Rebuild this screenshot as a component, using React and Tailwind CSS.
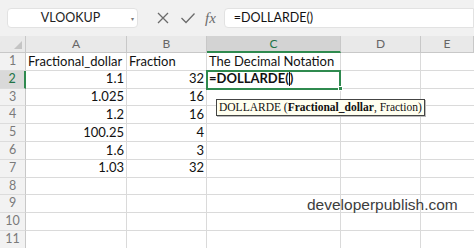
import React from 'react';

const cols = ['A', 'B', 'C', 'D', 'E'];
const rows = [
  ['Fractional_dollar', 'Fraction', 'The Decimal Notation'],
  ['1.1', '32'],
  ['1.025', '16'],
  ['1.2', '16'],
  ['100.25', '4'],
  ['1.6', '3'],
  ['1.03', '32'],
  [], [], [], [],
];

const Cell = ({ children, className = '' }) => (
  <div className={`h-[17.8px] border-r border-b border-[#dadada] px-[2px] flex items-center overflow-visible whitespace-nowrap ${className}`}>
    {children}
  </div>
);

const App = () => {
  return (
    <div className="w-[474px] h-[248px] overflow-hidden bg-white relative" style={{ fontFamily: 'Lato, "Open Sans", sans-serif' }}>
      {/* Formula bar */}
      <div className="h-[36px] bg-[#f1f1f1] flex items-center">
        <div className="ml-[7px] w-[131px] h-[20px] bg-white rounded-[4px] border border-[#e2e2e2] flex items-center relative">
          <span className="flex-1 text-center text-[12.5px] text-[#222] pr-[4px]">VLOOKUP</span>
          <span className="absolute right-[3px] top-[5px] text-[6px] text-[#777]">▾</span>
        </div>
        <div className="flex items-center ml-[18px] gap-[10px] text-[#6b6b6b]">
          <svg width="14" height="14" viewBox="0 0 14 14"><path d="M2 2 L12 12 M12 2 L2 12" stroke="#6b6b6b" strokeWidth="1.3" fill="none" /></svg>
          <svg width="16" height="14" viewBox="0 0 16 14"><path d="M1.5 7 L6 11.5 L14.5 2.5" stroke="#6b6b6b" strokeWidth="1.3" fill="none" /></svg>
          <span className="italic text-[15px] leading-none text-[#6b6b6b] -ml-[1px]" style={{ fontFamily: '"Liberation Serif", serif' }}>fx</span>
        </div>
        <div className="ml-[8px] flex-1 h-[20px] bg-white rounded-l-[4px] border border-[#e2e2e2] flex items-center pl-[9px] text-[12.5px] text-[#111]">
          =DOLLARDE()
        </div>
      </div>

      {/* Sheet grid */}
      <div className="grid grid-cols-[26px_101px_80px_134px_80px_53px] text-[13px] text-[#111]">
        {/* header row */}
        <div className="h-[17px] bg-[#e9e9e9] border-r border-b border-[#c8c8c8] relative">
          <div className="absolute right-[3px] bottom-[3px] w-0 h-0 border-l-[8px] border-l-transparent border-b-[8px] border-b-[#c4c4c4]" />
        </div>
        {cols.map((c) => (
          <div
            key={c}
            className={`h-[17px] flex items-center justify-center text-[12px] border-r ${
              c === 'C'
                ? 'bg-[#d3d3d3] text-[#217346] border-b-2 border-b-[#2f8a4f] border-r-[#c8c8c8]'
                : 'bg-[#e9e9e9] text-[#666] border-b border-[#c8c8c8]'
            }`}
          >
            {c}
          </div>
        ))}

        {rows.map((r, i) => (
          <React.Fragment key={i}>
            <div
              className={`h-[17.8px] flex items-center justify-center text-[12.5px] border-b border-[#dcdcdc] ${
                i === 1 ? 'bg-[#d9d9d9] text-[#217346] border-r-2 border-r-[#2f8a4f]' : 'bg-[#f2f2f2] text-[#7a7a7a] border-r border-r-[#c8c8c8]'
              }`}
            >
              {i + 1}
            </div>
            <Cell className={i === 0 ? '' : 'justify-end'}>{r[0]}</Cell>
            <Cell className={i === 0 ? '' : 'justify-end'}>{r[1]}</Cell>
            {i === 1 ? (
              <Cell className="relative">
                <div className="absolute -left-[1px] -top-[1px] w-[135px] h-[19.8px] border-2 border-[#2f8a4f]" />
                <div className="absolute right-[-3px] bottom-[-3px] w-[5px] h-[5px] bg-[#2f8a4f] border border-white" />
                <span className="font-bold">=DOLLARDE(</span>
                <span className="inline-block w-px h-[14px] bg-[#111]" />
                <span className="font-bold">)</span>
              </Cell>
            ) : (
              <Cell>{r[2]}</Cell>
            )}
            <Cell />
            <Cell className="border-r-0" />
          </React.Fragment>
        ))}
      </div>

      {/* Function argument tooltip */}
      <div
        className="absolute left-[216px] top-[99px] h-[17px] px-[2px] bg-[#fffff0] border border-[#444] flex items-center text-[11.5px] text-[#111] whitespace-nowrap shadow-[1px_1px_0_#bbb]"
        style={{ fontFamily: '"Liberation Serif", serif' }}
      >
        DOLLARDE (<span className="font-bold">Fractional_dollar</span>, Fraction)
      </div>

      {/* Watermark */}
      <div className="absolute left-[307px] top-[193px] text-[15.5px] text-[#3d3d3d]" style={{ fontFamily: '"Liberation Sans", Arial, sans-serif' }}>
        developerpublish.com
      </div>
    </div>
  );
};

export default App;
